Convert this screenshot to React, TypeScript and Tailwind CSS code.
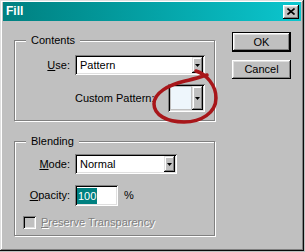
import React from "react";

const raised =
  "shadow-[inset_-1px_-1px_#000,inset_1px_1px_#fff,inset_-2px_-2px_#808080,inset_2px_2px_#dfdfdf]";
const raisedThin = "shadow-[inset_-1px_-1px_#000,inset_1px_1px_#dfdfdf,inset_-2px_-2px_#808080,inset_2px_2px_#fff]";
const sunken =
  "shadow-[inset_1px_1px_#808080,inset_-1px_-1px_#fff,inset_2px_2px_#000,inset_-2px_-2px_#dfdfdf]";
const etched = "border border-[#808080] shadow-[inset_1px_1px_#fff,1px_1px_#fff]";

function Arrow() {
  return (
    <svg width="5" height="3" viewBox="0 0 5 3">
      <polygon points="0,0 5,0 2.5,3" fill="#000" />
    </svg>
  );
}

function Select({ value, width }: { value: string; width: string }) {
  return (
    <div className={`flex h-[20px] ${width} bg-white p-[2px] ${sunken}`}>
      <span className="flex-1 pl-[3px] leading-[16px] text-black">{value}</span>
      <span className={`flex h-full w-[11px] items-center justify-center bg-[#c0c0c0] ${raisedThin}`}>
        <Arrow />
      </span>
    </div>
  );
}

function Group({ title, children, className }: { title: string; children: React.ReactNode; className: string }) {
  return (
    <div className={`relative w-[201px] ${etched} ${className}`}>
      <span className="absolute -top-[7px] left-[11px] bg-[#c0c0c0] px-[5px] leading-[13px] text-black">
        {title}
      </span>
      {children}
    </div>
  );
}

function Label({ hot, rest }: { hot: string; rest: string }) {
  return (
    <span className="w-[55px] text-right text-black">
      <span className="underline underline-offset-1">{hot}</span>
      {rest}
    </span>
  );
}

export default function App() {
  return (
    <div className="h-[252px] w-[305px] bg-[#c0c0c0] font-['Liberation_Sans',Arial,sans-serif] text-[11px] leading-[13px]">
      <div
        className={`relative h-[251px] w-[304px] bg-[#c0c0c0] pt-[2px] shadow-[inset_-1px_-1px_#0a0a0a,inset_1px_1px_#dfdfdf,inset_-2px_-2px_#808080,inset_2px_2px_#fff]`}
      >
        <div className="mx-[3px] flex h-[19px] items-center justify-between bg-gradient-to-r from-[#008080] to-[#0cc6ce] pl-[3px] pr-[2px]">
          <span className="text-[12px] font-bold text-white">Fill</span>
          <span className={`flex h-[14px] w-[16px] items-center justify-center bg-[#c0c0c0] ${raised}`}>
            <svg width="8" height="7" viewBox="0 0 8 7">
              <path d="M0.5 0.5 L7.5 6.5 M7.5 0.5 L0.5 6.5" stroke="#000" strokeWidth="1.6" />
            </svg>
          </span>
        </div>

        <div className="flex gap-[17px] pl-[14px]">
          <div className="flex flex-col gap-[20px] pt-[19px]">
            <Group title="Contents" className="pt-[14px] pb-[8px]">
              <div className="flex h-[20px] items-center gap-[5px]">
                <Label hot="U" rest="se:" />
                <Select value="Pattern" width="w-[130px]" />
              </div>
              <div className="mt-[9px] flex h-[28px] items-center pl-[60px] pr-[9px]">
                <span className="text-black">Custom Pattern:</span>
                <div className={`ml-auto flex h-[28px] w-[37px] bg-[#c0c0c0] p-[2px] ${sunken}`}>
                  <span className="m-[1px] flex-1 bg-[#eef6fc]" />
                  <span className={`flex w-[11px] items-center justify-center bg-[#c0c0c0] ${raisedThin}`}>
                    <Arrow />
                  </span>
                </div>
              </div>
            </Group>

            <Group title="Blending" className="pt-[12px] pb-[6px]">
              <div className="flex h-[20px] items-center gap-[5px]">
                <Label hot="M" rest="ode:" />
                <Select value="Normal" width="w-[102px]" />
              </div>
              <div className="mt-[11px] flex h-[21px] items-center gap-[5px]">
                <Label hot="O" rest="pacity:" />
                <div className={`flex h-[21px] w-[43px] items-center bg-white px-[2px] ${sunken}`}>
                  <span className="bg-[#008080] px-[1px] leading-[16px] text-white">100</span>
                </div>
                <span className="ml-[1px] text-black">%</span>
              </div>
              <div className="mt-[10px] flex h-[13px] items-center gap-[5px] pl-[8px]">
                <span className={`h-[13px] w-[13px] bg-[#c0c0c0] ${sunken}`} />
                <span className="text-[#808080] [text-shadow:1px_1px_0_#fff]">
                  <span className="underline underline-offset-1">P</span>reserve Transparency
                </span>
              </div>
            </Group>
          </div>

          <div className="flex flex-col gap-[8px] pt-[11px]">
            <button className={`h-[20px] w-[59px] border border-black bg-[#c0c0c0] text-black ${raised}`}>OK</button>
            <button className={`h-[19px] w-[59px] bg-[#c0c0c0] text-black ${raised}`}>Cancel</button>
          </div>
        </div>

        <svg
          className="pointer-events-none absolute inset-0"
          width="305"
          height="252"
          viewBox="0 0 305 252"
        >
          <path
            d="M196 71 C206 74, 216 85, 216 98 C216 113, 201 122, 184 122 C167 122, 154 115, 154 104 C154 93, 168 85, 185 81 C194 79, 200 77, 207 75"
            fill="none"
            stroke="#a8161a"
            strokeWidth="3.5"
            strokeLinecap="round"
          />
        </svg>
      </div>
    </div>
  );
}
